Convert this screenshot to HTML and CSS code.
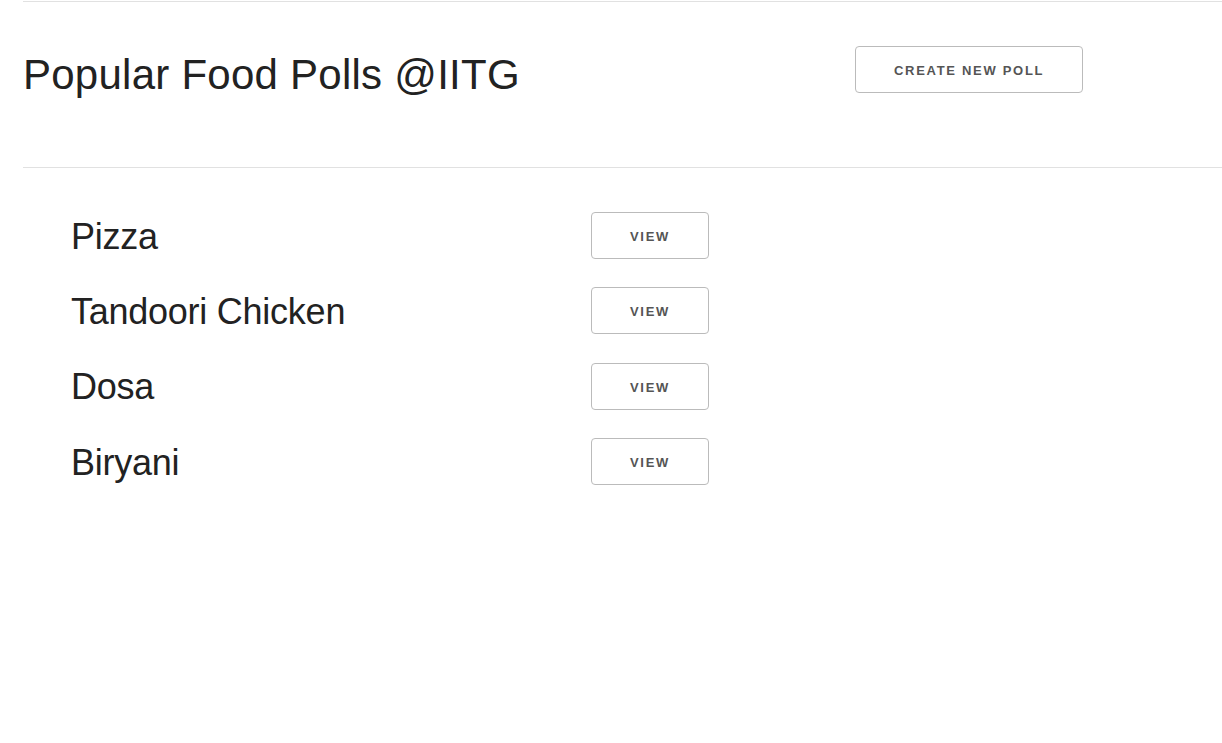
FILE: index.html
```html
<!DOCTYPE html>
<html lang="en">

<head>
    <meta charset="UTF-8" />
    <meta name="viewport" content="width=device-width, initial-scale=1.0" />
    <title>Popular Food Polls @IITG</title>
    <link rel="stylesheet" href="styles.css">
</head>

<body>
    <div class="page">
        <div class="header">
            <h1 class="title">Popular Food Polls @IITG</h1>
            <button class="button">Create new poll</button>
        </div>
        <ul class="polls">
            <li class="poll">
                <span class="poll-name">Pizza</span>
                <button class="button">View</button>
            </li>
            <li class="poll">
                <span class="poll-name">Tandoori Chicken</span>
                <button class="button">View</button>
            </li>
            <li class="poll">
                <span class="poll-name">Dosa</span>
                <button class="button">View</button>
            </li>
            <li class="poll">
                <span class="poll-name">Biryani</span>
                <button class="button">View</button>
            </li>
        </ul>
    </div>
</body>

</html>
```

FILE: styles.css
```css
* {
    margin: 0;
    padding: 0;
    box-sizing: border-box;
}

body {
    background-color: #fff;
    color: #222;
    font-family: "Liberation Sans", Arial, sans-serif;
}

.page {
    padding-left: 23px;
    padding-top: 1px;
}

.header {
    display: flex;
    align-items: flex-start;
    border-top: 1px solid #e1e1e1;
    border-bottom: 1px solid #e1e1e1;
    padding: 44px 0 67px;
}

.title {
    width: 832px;
    margin-top: 4px;
    font-size: 42px;
    font-weight: normal;
    line-height: 50px;
    letter-spacing: 0.25px;
}

.button {
    height: 47px;
    padding: 2px 38px 0;
    background-color: transparent;
    color: #555;
    border: 1px solid #bbb;
    border-radius: 4px;
    font-family: "Liberation Sans", Arial, sans-serif;
    font-size: 13px;
    font-weight: bold;
    letter-spacing: 1.7px;
    text-transform: uppercase;
    cursor: pointer;
}

.button:hover {
    border-color: #888;
    color: #333;
}

.polls {
    list-style: none;
    padding: 44px 0 0 48px;
}

.poll {
    display: flex;
    align-items: center;
    height: 47px;
    margin-bottom: 28.4px;
}

.poll-name {
    width: 520px;
    padding-top: 2px;
    font-size: 36px;
    letter-spacing: -0.25px;
}
```
